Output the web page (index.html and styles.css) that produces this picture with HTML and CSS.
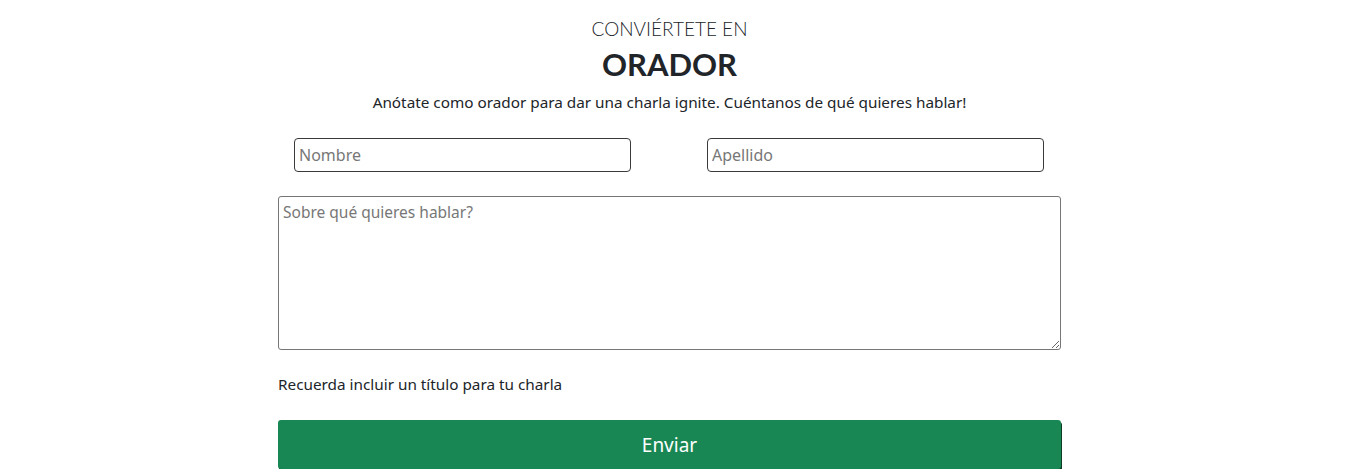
FILE: index.html
```html
<!DOCTYPE html>
<html>
<head>
    <title>Orador</title>
    <link rel="stylesheet" href="styles.css">
</head>
<body>
    <section class="orador">
        <h2 class="orador-pre">CONVIÉRTETE EN</h2>
        <h1 class="orador-title">ORADOR</h1>
        <p class="orador-lead">Anótate como orador para dar una charla ignite. Cuéntanos de qué quieres hablar!</p>

        <form class="orador-form">
            <div class="name-row">
                <input class="name-input" type="text" placeholder="Nombre">
                <input class="name-input" type="text" placeholder="Apellido">
            </div>
            <textarea class="topic" placeholder="Sobre qué quieres hablar?"></textarea>
            <p class="hint">Recuerda incluir un título para tu charla</p>
            <button class="send-btn" type="button">Enviar</button>
        </form>
    </section>
</body>
</html>
```

FILE: styles.css
```css
 body {
     font-family: "Noto Sans", sans-serif;
     margin: 0;
     padding-right: 6px;
     color: #212529;
     background: #fff;
 }

 .orador {
     width: 783px;
     margin: 0 auto;
     padding-top: 17px;
     text-align: center;
 }

 .orador-pre {
     font-family: Lato, sans-serif;
     font-weight: 300;
     font-size: 19px;
     line-height: 24px;
     margin: 0;
 }

 .orador-title {
     font-family: Lato, sans-serif;
     font-weight: 700;
     font-size: 31px;
     line-height: 38px;
     margin: 4px 0 0;
 }

 .orador-lead {
     font-size: 15.3px;
     margin: 7px 0 0;
     line-height: 24px;
 }

 .orador-form {
     text-align: left;
     margin-top: 24px;
 }

 .name-row {
     display: flex;
     justify-content: space-between;
     padding: 0 17px 0 16px;
 }

 .name-input {
     width: 337px;
     height: 34px;
     box-sizing: border-box;
     border: 1px solid #3a3a3a;
     border-radius: 4px;
     padding: 0 4px;
     font-family: "Noto Sans", sans-serif;
     font-size: 16px;
     color: #212529;
 }

 .name-input::placeholder,
 .topic::placeholder {
     color: #777;
 }

 .topic {
     display: block;
     width: 100%;
     height: 154px;
     box-sizing: border-box;
     margin-top: 24px;
     border: 1px solid #767676;
     border-radius: 3px;
     padding: 4px;
     font-family: "Noto Sans", sans-serif;
     font-size: 15.5px;
 }

 .hint {
     margin: 22px 0 0;
     font-size: 15.3px;
     line-height: 24px;
 }

 .send-btn {
     display: block;
     width: 100%;
     height: 49px;
     margin-top: 24px;
     background-color: #198754;
     color: #fff;
     border: none;
     border-radius: 3px;
     box-shadow: 1px 2px 0 #0d3b23;
     font-family: "Noto Sans", sans-serif;
     font-size: 19px;
     cursor: pointer;
 }
```
